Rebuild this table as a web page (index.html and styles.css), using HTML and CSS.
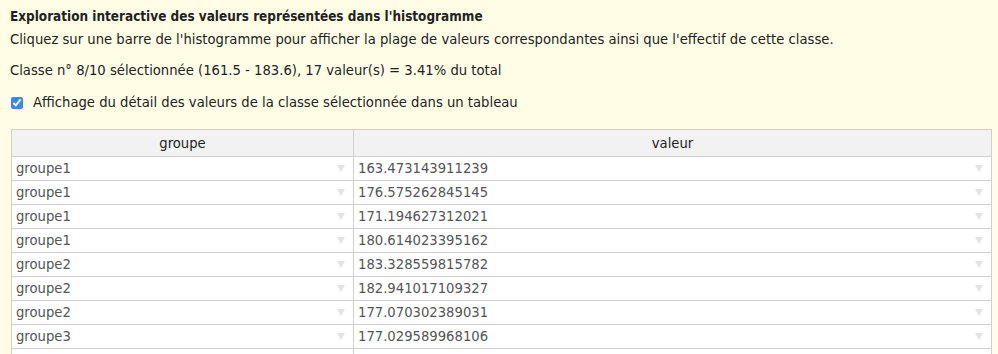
FILE: index.html
```html
<!DOCTYPE html>
<html lang="fr">
<head>
<meta charset="utf-8">
<title>Exploration</title>
<link rel="stylesheet" href="styles.css">
</head>
<body>
<div class="page">
  <div class="title">Exploration interactive des valeurs représentées dans l'histogramme</div>
  <div class="intro">Cliquez sur une barre de l'histogramme pour afficher la plage de valeurs correspondantes ainsi que l'effectif de cette classe.</div>
  <div class="summary">Classe n° 8/10 sélectionnée (161.5 - 183.6), 17 valeur(s) = 3.41% du total</div>
  <label class="check"><input type="checkbox" checked> Affichage du détail des valeurs de la classe sélectionnée dans un tableau</label>
  <table class="grid">
    <colgroup><col class="c1"><col class="c2"></colgroup>
    <thead><tr><th>groupe</th><th>valeur</th></tr></thead>
    <tbody>
      <tr><td><div class="cell"><span>groupe1</span><span class="tri"></span></div></td><td><div class="cell"><span>163.473143911239</span><span class="tri"></span></div></td></tr>
      <tr><td><div class="cell"><span>groupe1</span><span class="tri"></span></div></td><td><div class="cell"><span>176.575262845145</span><span class="tri"></span></div></td></tr>
      <tr><td><div class="cell"><span>groupe1</span><span class="tri"></span></div></td><td><div class="cell"><span>171.194627312021</span><span class="tri"></span></div></td></tr>
      <tr><td><div class="cell"><span>groupe1</span><span class="tri"></span></div></td><td><div class="cell"><span>180.614023395162</span><span class="tri"></span></div></td></tr>
      <tr><td><div class="cell"><span>groupe2</span><span class="tri"></span></div></td><td><div class="cell"><span>183.328559815782</span><span class="tri"></span></div></td></tr>
      <tr><td><div class="cell"><span>groupe2</span><span class="tri"></span></div></td><td><div class="cell"><span>182.941017109327</span><span class="tri"></span></div></td></tr>
      <tr><td><div class="cell"><span>groupe2</span><span class="tri"></span></div></td><td><div class="cell"><span>177.070302389031</span><span class="tri"></span></div></td></tr>
      <tr><td><div class="cell"><span>groupe3</span><span class="tri"></span></div></td><td><div class="cell"><span>177.029589968106</span><span class="tri"></span></div></td></tr>
      <tr><td><div class="cell"><span>groupe3</span><span class="tri"></span></div></td><td><div class="cell"><span>178.112345678901</span><span class="tri"></span></div></td></tr>
    </tbody>
  </table>
</div>
</body>
</html>
```
FILE: styles.css
```css
html, body {
  margin: 0;
  padding: 0;
  background: #fffde6;
  overflow: hidden;
}
.page {
  padding: 5px 0 0 10px;
  font-family: "DejaVu Sans", sans-serif;
  font-size: 13.2px;
  color: #222;
}
.title {
  font-family: "DejaVu Sans Condensed", "DejaVu Sans", sans-serif;
  font-weight: bold;
  font-size: 13.45px;
  line-height: 23px;
}
.intro {
  line-height: 23px;
}
.summary {
  margin-top: 8px;
  line-height: 23px;
}
.check {
  display: flex;
  align-items: center;
  margin-top: 9px;
  line-height: 23px;
}
.check input {
  margin: 0 10px 0 1px;
  width: 12px;
  height: 12px;
  accent-color: #3a86f0;
}
.grid {
  margin-top: 15px;
  margin-left: 1px;
  width: 981px;
  table-layout: fixed;
  border-collapse: collapse;
  border: 1px solid #d0d0d0;
  background: #fff;
}
.c1 { width: 342px; }
.grid th {
  height: 26px;
  padding: 0;
  background: #f2f2f2;
  font-weight: normal;
  color: #222;
  border: 1px solid #d0d0d0;
  text-align: center;
}
.grid td {
  height: 23px;
  padding: 0;
  border: 1px solid #d0d0d0;
  color: #555;
}
.cell {
  display: flex;
  justify-content: space-between;
  align-items: center;
  padding: 0 8px 0 4px;
}
.tri {
  width: 0;
  height: 0;
  border-left: 4px solid transparent;
  border-right: 4px solid transparent;
  border-top: 7px solid #e4e4e4;
}
```
